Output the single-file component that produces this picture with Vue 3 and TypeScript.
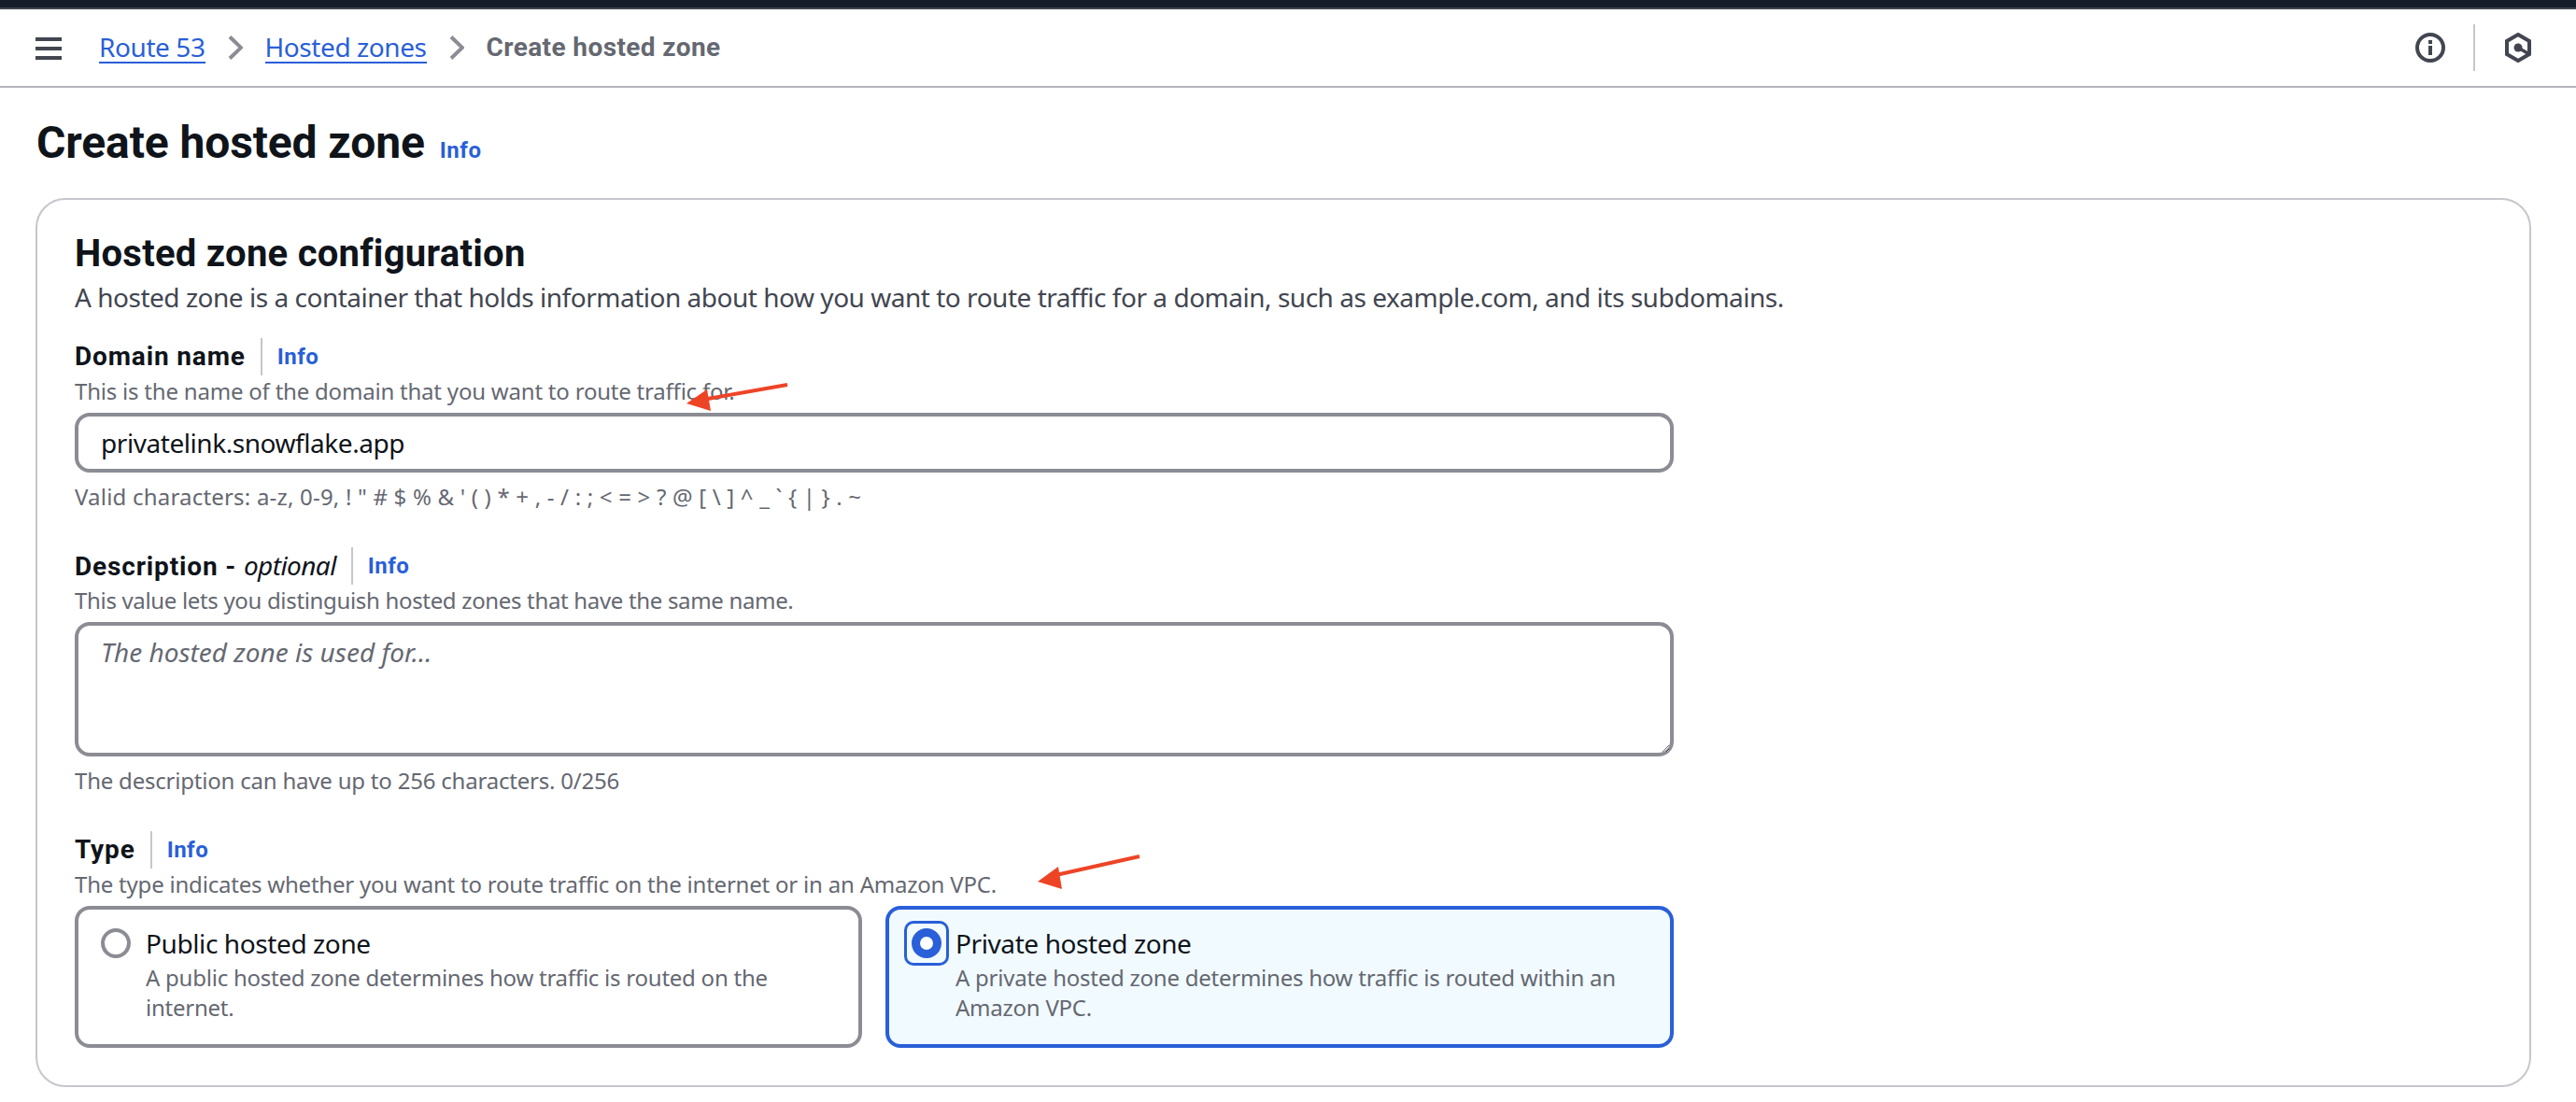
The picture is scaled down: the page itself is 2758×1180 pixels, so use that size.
<script setup lang="ts">
const arrows: { tail: string; head: string }[] = [
  { tail: "843,412 752,428", head: "735,432 757,417 761,440" },
  { tail: "1220,917 1126,938", head: "1111,944 1133,928 1137,952" },
];
</script>

<template>
  <div class="page">
    <div class="topbar"></div>
    <header class="crumbs">
      <svg class="burger" width="28" height="24" viewBox="0 0 28 24" aria-hidden="true">
        <rect y="0" width="28" height="4" />
        <rect y="10" width="28" height="4" />
        <rect y="20" width="28" height="4" />
      </svg>
      <nav class="trail">
        <a class="crumb-link">Route 53</a>
        <svg class="chev" width="16" height="26" viewBox="0 0 16 26" aria-hidden="true"><path d="M2 1.5 14 13 2 24.5" /></svg>
        <a class="crumb-link">Hosted zones</a>
        <svg class="chev" width="16" height="26" viewBox="0 0 16 26" aria-hidden="true"><path d="M2 1.5 14 13 2 24.5" /></svg>
        <span class="crumb-current">Create hosted zone</span>
      </nav>
      <div class="tools">
        <svg class="tool" width="32" height="32" viewBox="0 0 32 32" aria-hidden="true">
          <circle cx="16" cy="16" r="14" class="line" />
          <rect x="14" y="8" width="4" height="4" class="fill" />
          <rect x="14" y="14" width="4" height="10" class="fill" />
        </svg>
        <span class="tool-sep"></span>
        <svg class="tool" width="28" height="32" viewBox="0 0 28 32" aria-hidden="true">
          <path d="M14 2 26 9v14l-12 7-12-7V9Z" class="line" />
          <circle cx="14" cy="16" r="4.5" class="fill" />
          <path d="M14 16 25 22.5" class="line thin" />
        </svg>
      </div>
    </header>

    <div class="title-row">
      <h1>Create hosted zone</h1>
      <a class="info">Info</a>
    </div>

    <section class="card">
      <h2>Hosted zone configuration</h2>
      <p class="card-desc">A hosted zone is a container that holds information about how you want to route traffic for a domain, such as example.com, and its subdomains.</p>

      <div class="field first">
        <div class="label-row"><label>Domain name</label><span class="sep"></span><a class="info">Info</a></div>
        <p class="hint">This is the name of the domain that you want to route traffic for.</p>
        <input class="control" type="text" value="privatelink.snowflake.app" />
        <p class="hint below chars">Valid characters: a-z, 0-9, ! " # $ % &amp; ' ( ) * + , - / : ; &lt; = &gt; ? @ [ \ ] ^ _ ` { | } . ~</p>
      </div>

      <div class="field">
        <div class="label-row"><label>Description - <em>optional</em></label><span class="sep"></span><a class="info">Info</a></div>
        <p class="hint tight">This value lets you distinguish hosted zones that have the same name.</p>
        <textarea class="control area" placeholder="The hosted zone is used for..."></textarea>
        <p class="hint below">The description can have up to 256 characters. 0/256</p>
      </div>

      <div class="field">
        <div class="label-row"><label>Type</label><span class="sep"></span><a class="info">Info</a></div>
        <p class="hint">The type indicates whether you want to route traffic on the internet or in an Amazon VPC.</p>
        <div class="tiles">
          <div class="tile">
            <span class="radio"></span>
            <div class="tile-text">
              <div class="tile-title">Public hosted zone</div>
              <div class="tile-desc">A public hosted zone determines how traffic is routed on the internet.</div>
            </div>
          </div>
          <div class="tile selected">
            <span class="radio on"></span>
            <div class="tile-text">
              <div class="tile-title">Private hosted zone</div>
              <div class="tile-desc">A private hosted zone determines how traffic is routed within an Amazon VPC.</div>
            </div>
          </div>
        </div>
      </div>
    </section>

    <svg class="annotations" width="2758" height="1180" viewBox="0 0 2758 1180" aria-hidden="true">
      <g v-for="(a, i) in arrows" :key="i">
        <polyline :points="a.tail" class="arrow-tail" />
        <polygon :points="a.head" class="arrow-head" />
      </g>
    </svg>
  </div>
</template>

<style>
html, body { background: #ffffff; }
</style>

<style scoped>
.page {
  position: relative;
  width: 2758px;
  height: 1180px;
  overflow: hidden;
  background: #fff;
  font-family: "Noto Sans", sans-serif;
  color: #0f141a;
}
.topbar {
  height: 8px;
  background: #161d2a;
  border-bottom: 2px solid #41454f;
}
.crumbs {
  display: flex;
  align-items: center;
  height: 82px;
  padding: 0 48px 0 38px;
  border-bottom: 2px solid #b4b4bb;
}
.burger { fill: #424650; margin-top: 2px; }
.trail {
  display: flex;
  align-items: center;
  margin-left: 40px;
  font-size: 28px;
  line-height: 36px;
}
.crumb-link {
  color: #295fd8;
  border-bottom: 2px solid #295fd8;
  line-height: 32px;
  letter-spacing: -0.42px;
}
.crumb-current {
  color: #656871;
  font-family: Roboto, sans-serif;
  font-weight: 700;
  letter-spacing: 0.4px;
}
.chev { fill: none; stroke: #8c8c94; stroke-width: 4px; margin: 0 24px; }
.tools { display: flex; align-items: center; margin-left: auto; }
.line { fill: none; stroke: #424650; stroke-width: 4px; }
.thin { stroke-width: 3.5px; }
.fill { fill: #424650; }
.tool-sep { width: 2px; height: 50px; background: #c6c6cd; margin: 0 32px 0 30px; }
.title-row {
  display: flex;
  align-items: baseline;
  padding: 31px 0 0 39px;
  height: 87px;
  box-sizing: border-box;
}
h1 {
  margin: 0;
  font-family: Roboto, sans-serif;
  font-size: 48px;
  line-height: 56px;
  font-weight: 700;
  letter-spacing: -0.12px;
}
.title-row .info { margin-left: 16px; }
.info {
  color: #295fd8;
  font-family: Roboto, sans-serif;
  font-size: 24px;
  font-weight: 700;
  letter-spacing: 0.5px;
}
.card {
  box-sizing: border-box;
  width: 2672px;
  height: 952px;
  margin: 31px 0 0 38px;
  padding: 36px 40px 0 40px;
  border: 2px solid #c6c6cd;
  border-radius: 32px;
}
h2 {
  margin: 0;
  font-family: Roboto, sans-serif;
  font-size: 40px;
  line-height: 44px;
  font-weight: 700;
  letter-spacing: 0.26px;
}
.card-desc {
  margin: 4px 0 0;
  font-size: 28px;
  line-height: 40px;
  color: #424650;
  letter-spacing: -0.48px;
}
.field { width: 1712px; margin-top: 38px; }
.field.first { margin-top: 24px; }
.label-row {
  display: flex;
  align-items: center;
  height: 40px;
}
label {
  font-family: Roboto, sans-serif;
  font-size: 28px;
  font-weight: 700;
  line-height: 40px;
  letter-spacing: 0.85px;
}
label em {
  font-family: "Noto Sans", sans-serif;
  font-weight: 400;
  font-style: italic;
  letter-spacing: -0.6px;
}
.sep { width: 2px; height: 40px; background: #c6c6cd; margin: 0 16px; }
.hint {
  margin: 1px 0 0;
  font-size: 24px;
  line-height: 32px;
  color: #656871;
  letter-spacing: -0.21px;
}
.hint.tight { letter-spacing: -0.33px; }
.hint.below { margin-top: 10px; }
.hint.chars { letter-spacing: 0.2px; }
.control {
  display: block;
  box-sizing: border-box;
  width: 100%;
  height: 64px;
  margin: 7px 0 0;
  padding: 0 24px;
  border: 4px solid #8c8c94;
  border-radius: 16px;
  background: #fff;
  outline: none;
  font: 400 28px/40px "Noto Sans", sans-serif;
  color: #0f141a;
  letter-spacing: -0.44px;
}
.area {
  height: 144px;
  padding: 8px 24px;
  resize: both;
  letter-spacing: 0;
}
.area::placeholder { color: #656871; font-style: italic; opacity: 1; }
.tiles {
  display: grid;
  grid-template-columns: 843px 844px;
  column-gap: 25px;
  margin-top: 7px;
}
.tile {
  box-sizing: border-box;
  display: flex;
  height: 152px;
  padding: 20px 24px 0;
  border: 4px solid #8c8c94;
  border-radius: 16px;
}
.tile.selected {
  background: #f1faff;
  border-color: #295fd8;
}
.radio {
  position: relative;
  flex: none;
  box-sizing: border-box;
  width: 32px;
  height: 32px;
  border: 4px solid #8c8c94;
  border-radius: 50%;
  background: #fff;
}
.radio.on { border: 9px solid #295fd8; }
.radio.on::before {
  content: "";
  position: absolute;
  inset: -17px;
  border: 3px solid #295fd8;
  border-radius: 10px;
}
.tile-text { margin-left: 16px; }
.selected .tile-text { margin-left: 15px; }
.tile-title {
  font-size: 28px;
  line-height: 32px;
  color: #0f141a;
  letter-spacing: -0.4px;
}
.tile-desc {
  margin-top: 5px;
  font-size: 24px;
  line-height: 32px;
  color: #656871;
  letter-spacing: -0.24px;
}
.annotations {
  position: absolute;
  top: 0;
  left: 0;
  pointer-events: none;
}
.arrow-tail { fill: none; stroke: #ee4426; stroke-width: 4px; }
.arrow-head { fill: #ee4426; }
</style>
